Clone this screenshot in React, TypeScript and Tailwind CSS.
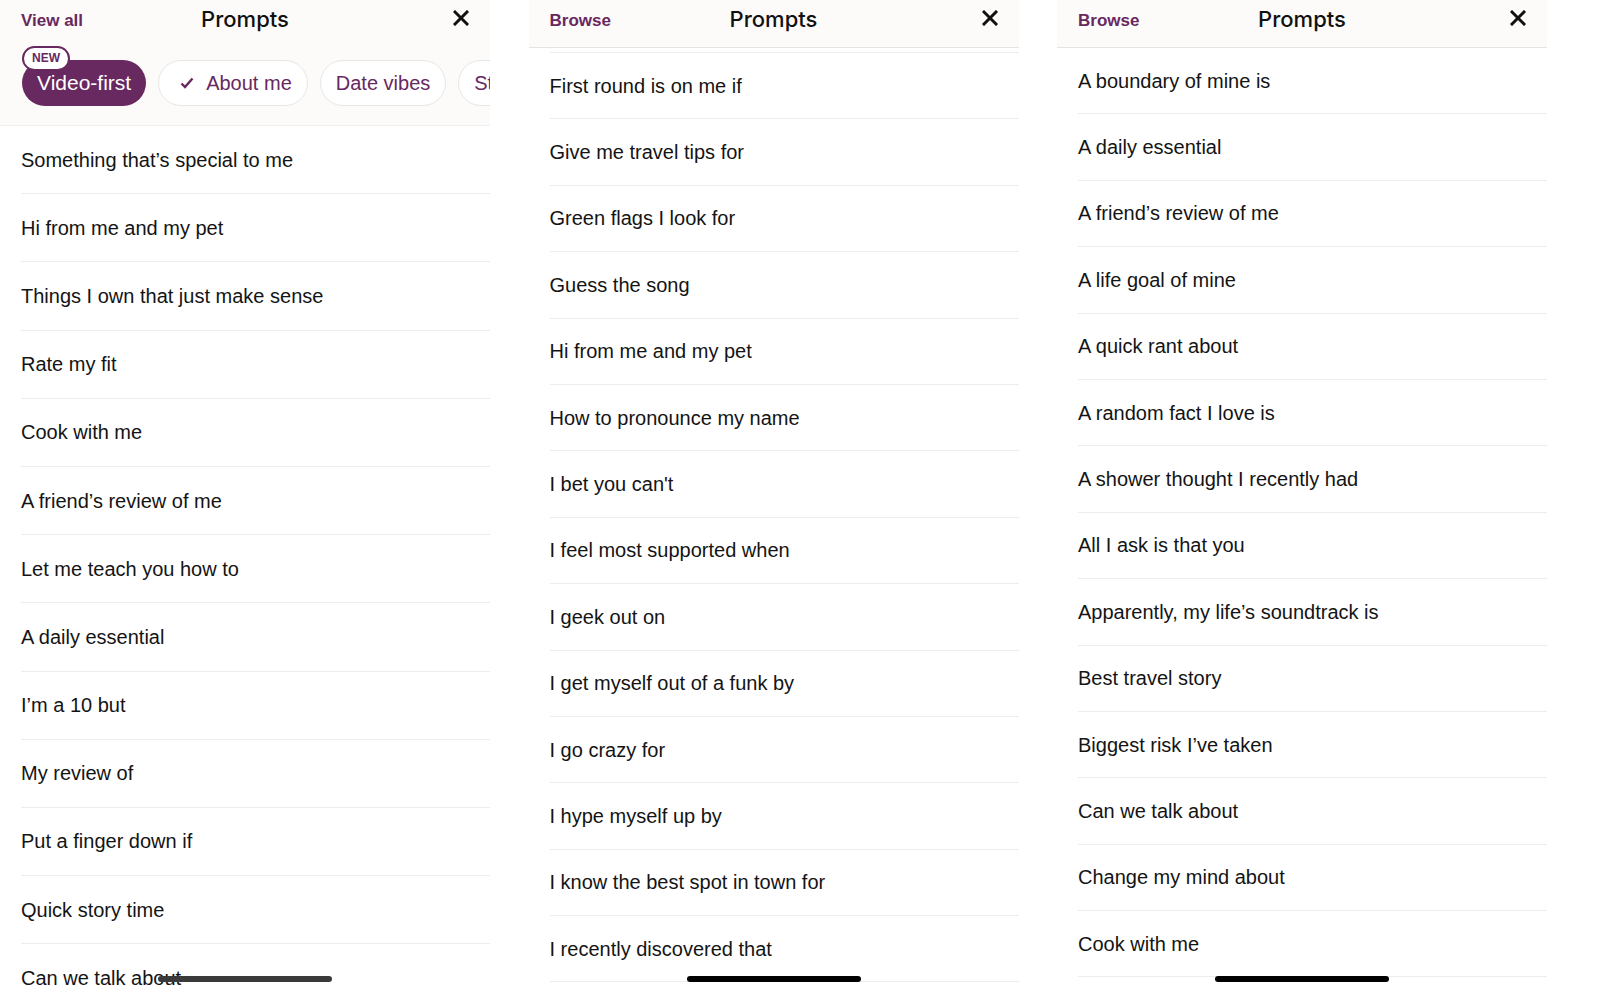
import React from "react";

const PURPLE = "#682860";

const browseList = [
  "Something that’s special to me",
  "Hi from me and my pet",
  "Things I own that just make sense",
  "Rate my fit",
  "Cook with me",
  "A friend’s review of me",
  "Let me teach you how to",
  "A daily essential",
  "I’m a 10 but",
  "My review of",
  "Put a finger down if",
  "Quick story time",
  "Can we talk about",
];

const middleList = [
  "First round is on me if",
  "Give me travel tips for",
  "Green flags I look for",
  "Guess the song",
  "Hi from me and my pet",
  "How to pronounce my name",
  "I bet you can't",
  "I feel most supported when",
  "I geek out on",
  "I get myself out of a funk by",
  "I go crazy for",
  "I hype myself up by",
  "I know the best spot in town for",
  "I recently discovered that",
];

const allList = [
  "A boundary of mine is",
  "A daily essential",
  "A friend’s review of me",
  "A life goal of mine",
  "A quick rant about",
  "A random fact I love is",
  "A shower thought I recently had",
  "All I ask is that you",
  "Apparently, my life’s soundtrack is",
  "Best travel story",
  "Biggest risk I’ve taken",
  "Can we talk about",
  "Change my mind about",
  "Cook with me",
];

const CloseIcon = () => (
  <svg width="16" height="16" viewBox="0 0 16 16" fill="none">
    <path d="M2 2 L14 14 M14 2 L2 14" stroke="#111" strokeWidth="3" strokeLinecap="square" />
  </svg>
);

const TitleRow = ({ left }: { left: string }) => (
  <div className="relative flex h-[38px] items-center px-[21px]">
    <span className="pt-[4px] text-[17px] font-bold" style={{ color: PURPLE }}>
      {left}
    </span>
    <span className="absolute left-1/2 -translate-x-1/2 font-['Inter'] text-[22px] font-medium text-[#111]">
      Prompts
    </span>
    <span className="absolute right-[21px] top-[10px]">
      <CloseIcon />
    </span>
  </div>
);

const HomeBar = ({ dark }: { dark?: boolean }) => (
  <div
    className={`absolute bottom-[11px] left-[158px] h-[6px] w-[174px] rounded-full ${
      dark ? "bg-[#3a3a3a]" : "bg-black"
    }`}
  />
);

const Row = ({ text, h }: { text: string; h: string }) => (
  <div className={`flex items-center border-b border-[#ededed] ${h}`}>
    <span className="text-[20px] text-[#141414]">{text}</span>
  </div>
);

const chip =
  "flex h-[46px] shrink-0 items-center rounded-full border border-[#e9e6e3] bg-white text-[20px]";

const BrowsePanel = () => (
  <div className="relative h-full w-[490px] shrink-0 overflow-hidden bg-white">
    <div className="border-b border-[#f1efed] bg-[#fcfbfa]">
      <TitleRow left="View all" />
      <div className="flex gap-3 whitespace-nowrap px-[22px] pb-[19px] pt-[22px]">
        <div className="relative shrink-0">
          <span
            className="absolute -top-[14px] left-0 z-10 rounded-full border-2 bg-white px-[8px] py-[1px] text-[12px] font-bold leading-[19px]"
            style={{ borderColor: PURPLE, color: PURPLE }}
          >
            NEW
          </span>
          <div className="flex h-[46px] items-center rounded-full bg-[#682860] pl-[15px] pr-[15px] text-[21px] text-white">
            Video-first
          </div>
        </div>
        <div className={`${chip} gap-3 pl-[21px] pr-[15px]`} style={{ color: PURPLE }}>
          <svg width="14" height="12" viewBox="0 0 14 12" fill="none">
            <path d="M1.5 6.5 L5 10 L12.5 1.5" stroke={PURPLE} strokeWidth="2.4" />
          </svg>
          About me
        </div>
        <div className={`${chip} px-[15px]`} style={{ color: PURPLE }}>
          Date vibes
        </div>
        <div className={`${chip} pl-[15px] pr-[80px]`} style={{ color: PURPLE }}>
          St
        </div>
      </div>
    </div>
    <div className="ml-[21px]">
      {browseList.map((t) => (
        <Row key={t} text={t} h="h-[68.2px]" />
      ))}
    </div>
    <HomeBar dark />
  </div>
);

const ListPanel = ({ items, peek }: { items: string[]; peek?: boolean }) => (
  <div className="relative h-full w-[490px] shrink-0 overflow-hidden bg-white">
    <div className="h-[48px] border-b border-[#e4e4e4] bg-[#fcfbfa]">
      <TitleRow left="Browse" />
    </div>
    <div className="ml-[21px]">
      {peek && <div className="h-[5px] border-b border-[#ededed]" />}
      {items.map((t) => (
        <Row key={t} text={t} h="h-[66.4px]" />
      ))}
    </div>
    <HomeBar />
  </div>
);

export default function App() {
  return (
    <div className="flex h-[993px] w-[1600px] gap-[38.5px] overflow-hidden bg-white font-['Liberation_Sans',Arial,sans-serif]">
      <BrowsePanel />
      <ListPanel items={middleList} peek />
      <ListPanel items={allList} />
    </div>
  );
}
